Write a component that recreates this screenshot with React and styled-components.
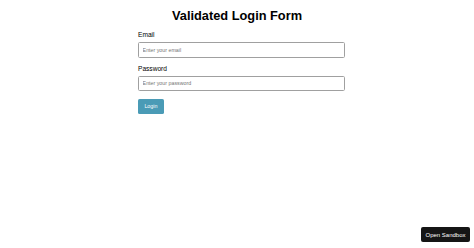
import React from "react";
import styled, { createGlobalStyle } from "styled-components";

const Global = createGlobalStyle`
  html, body { margin: 0; padding: 0; background: #fff; }
  body { font-family: "Liberation Sans", Arial, sans-serif; }
`;

const Page = styled.div`
  width: 474px;
  height: 248px;
  position: relative;
  overflow: hidden;
`;

const Container = styled.div`
  width: 198px;
  margin: 0 auto;
  padding-top: 8px;
`;

const Title = styled.h1`
  margin: 0 0 8px;
  font-size: 12.8px;
  line-height: 15px;
  font-weight: bold;
  text-align: center;
  color: #000;
`;

const Form = styled.form`
  display: flex;
  flex-direction: column;
`;

const Field = styled.div`
  margin-bottom: 7px;
`;

const Label = styled.label`
  display: block;
  font-size: 6.6px;
  line-height: 8px;
  color: #000;
  margin-bottom: 3px;
`;

const Input = styled.input`
  display: block;
  width: 100%;
  box-sizing: content-box;
  height: 7.6px;
  padding: 3px 3.6px;
  border: 0.6px solid #a0a0a0;
  border-radius: 1.6px;
  font-family: "Liberation Sans", Arial, sans-serif;
  font-size: 5.3px;
  outline: none;
  margin: 0;
  &::placeholder { color: #757575; }
`;

const Button = styled.button`
  align-self: flex-start;
  margin-top: 1px;
  height: 14.5px;
  padding: 0 6.4px;
  border: none;
  border-radius: 1.6px;
  background: #4a9bb6;
  color: #fff;
  font-family: "Liberation Sans", Arial, sans-serif;
  font-size: 5.3px;
`;

const Sandbox = styled.button`
  position: absolute;
  right: 4px;
  bottom: 6px;
  height: 15px;
  padding: 0 4.5px;
  border: none;
  border-radius: 2px;
  background: #151515;
  color: #fff;
  font-family: "Liberation Sans", Arial, sans-serif;
  font-size: 6px;
`;

export default function App() {
  return (
    <Page>
      <Global />
      <Container>
        <Title>Validated Login Form</Title>
        <Form onSubmit={(e) => e.preventDefault()}>
          <Field>
            <Label>Email</Label>
            <Input type="email" placeholder="Enter your email" />
          </Field>
          <Field>
            <Label>Password</Label>
            <Input type="password" placeholder="Enter your password" />
          </Field>
          <Button type="submit">Login</Button>
        </Form>
      </Container>
      <Sandbox>Open Sandbox</Sandbox>
    </Page>
  );
}
